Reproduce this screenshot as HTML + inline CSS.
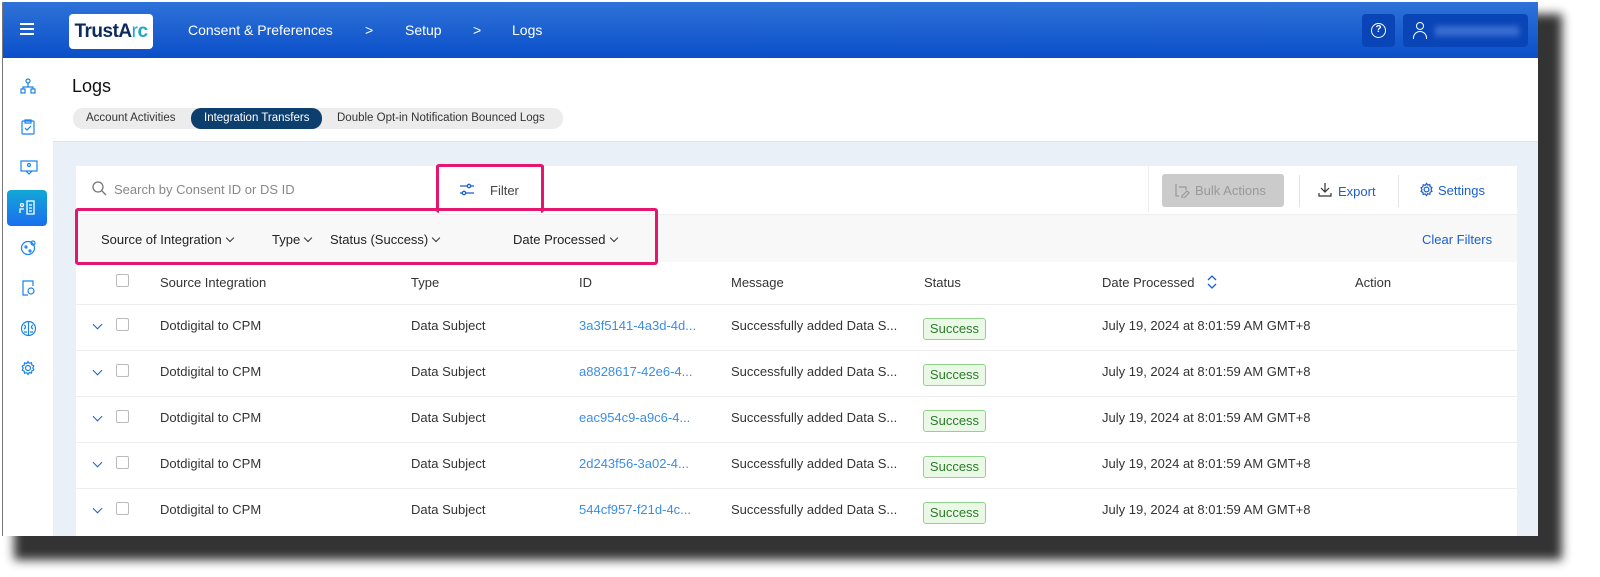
<!DOCTYPE html>
<html><head><meta charset="utf-8"><style>
*{box-sizing:border-box;margin:0;padding:0}
body{width:1600px;height:577px;background:#fff;font-family:"Liberation Sans",sans-serif;position:relative;overflow:hidden;font-size:13px;color:#222}
.shadow{position:absolute;left:14px;top:14px;width:1548px;height:546px;background:#333;filter:blur(5px)}
.app{position:absolute;left:2px;top:2px;width:1536px;height:534px;background:#eaf0f8;overflow:hidden;border-left:1px solid #777}
.hdr{position:absolute;left:0;top:0;width:100%;height:56px;background:linear-gradient(#2f72d8,#0a4fc9)}
.logo{position:absolute;left:66px;top:12px;width:84px;height:35px;background:#fff;border-radius:4px;font-size:19px;color:#0b2a5e;line-height:35px;text-align:center;font-weight:bold;letter-spacing:-0.5px}
.crumb{position:absolute;top:20px;color:#fff;font-size:14px}
.side{position:absolute;left:0;top:56px;width:50px;height:480px;background:#fff}
.top{position:absolute;left:50px;top:56px;right:0;height:84px;background:#fff;border-bottom:1px solid #dde4ee}
.tabs{position:absolute;left:20px;top:50px;height:21px;background:#ececec;border-radius:10px;width:490px;font-size:11.5px}
.tab{position:absolute;top:0;height:21px;line-height:21px;color:#333}
.card{position:absolute;left:73px;top:164px;width:1441px;height:380px;background:#fff}
.row{position:absolute;left:0;width:100%;border-top:1px solid #eee}
.c{position:absolute;font-size:13px;color:#333}
.succ{position:absolute;left:847px;width:63px;height:22px;border:1px solid #8fd48a;background:#eaf9e6;border-radius:3px;color:#2c7a2a;text-align:center;line-height:20px;font-size:13px}
.cb{position:absolute;left:40px;width:13px;height:13px;border:1px solid #bbb;border-radius:2px}
.pink{position:absolute;border:3px solid #e4166f;border-radius:3px}
.ic{position:absolute;left:17px}
.chev{display:inline-block;width:6px;height:6px;border-right:1.2px solid #333;border-bottom:1.2px solid #333;transform:rotate(45deg);margin-left:5px;position:relative;top:-3px}
.ex{position:absolute;left:18px;top:16px;width:7px;height:7px;border-right:1.5px solid #1a5fd0;border-bottom:1.5px solid #1a5fd0;transform:rotate(45deg)}
</style></head><body>
<div class="shadow"></div>
<div class="app">
<div class="hdr">
 <div style="position:absolute;left:17px;top:21px;width:14px;height:2px;background:#fff;box-shadow:0 5px 0 #fff,0 10px 0 #fff"></div>
 <div class="logo">TrustA<span style="color:#1aa9c6;font-weight:normal">r</span><span style="color:#1aa9c6">c</span></div>
 <div class="crumb" style="left:185px">Consent &amp; Preferences</div>
 <div class="crumb" style="left:362px">&gt;</div>
 <div class="crumb" style="left:402px">Setup</div>
 <div class="crumb" style="left:470px">&gt;</div>
 <div class="crumb" style="left:509px">Logs</div>
 <div style="position:absolute;left:1359px;top:12px;width:33px;height:33px;background:#0a45b8;border-radius:4px"><div style="position:absolute;left:9px;top:9px;width:15px;height:15px;border:1.5px solid #fff;border-radius:50%;color:#fff;font-size:10px;text-align:center;line-height:12px;font-weight:bold">?</div></div>
 <div style="position:absolute;left:1400px;top:12px;width:125px;height:33px;background:#0a45b8;border-radius:4px">
  <div style="position:absolute;left:13px;top:8px;width:8px;height:8px;border:1.5px solid #fff;border-radius:50%"></div>
  <div style="position:absolute;left:10px;top:17px;width:14px;height:8px;border:1.5px solid #fff;border-bottom:none;border-radius:7px 7px 0 0"></div>
  <div style="position:absolute;left:32px;top:12px;width:84px;height:10px;background:#3a6fd0;filter:blur(3px)"></div>
 </div>
</div>
<div class="side">
 <svg class="ic" style="top:20px" width="16" height="16" viewBox="0 0 16 16" fill="none" stroke="#1a82e8" stroke-width="1.2"><circle cx="8" cy="3" r="2"/><rect x="1" y="11" width="4" height="4"/><rect x="11" y="11" width="4" height="4"/><path d="M8 5v4M3 11V9h10v2"/></svg>
 <svg class="ic" style="top:60px" width="16" height="17" viewBox="0 0 16 17" fill="none" stroke="#1a82e8" stroke-width="1.2"><rect x="2" y="3" width="12" height="13" rx="1"/><path d="M5 2h6v3H5zM5 10l2 2 4-4"/></svg>
 <svg class="ic" style="top:101px" width="18" height="16" viewBox="0 0 18 16" fill="none" stroke="#1a82e8" stroke-width="1.2"><rect x="1" y="2" width="16" height="10"/><circle cx="9" cy="6" r="1.5"/><path d="M6 12l3 3 3-3"/></svg>
 <div style="position:absolute;left:4px;top:132px;width:40px;height:36px;border-radius:4px;background:linear-gradient(#12a8d6,#1b6ef0)"><svg style="position:absolute;left:11px;top:9px" width="18" height="18" viewBox="0 0 18 18" fill="none" stroke="#fff" stroke-width="1.3"><circle cx="4" cy="6" r="1.5"/><path d="M2 14v-4h4"/><rect x="9" y="2" width="7" height="13"/><path d="M11 6h3M11 9h3M11 12h3"/></svg></div>
 <svg class="ic" style="top:181px" width="17" height="17" viewBox="0 0 17 17" fill="none" stroke="#1a82e8" stroke-width="1.2"><circle cx="8" cy="9" r="6.5"/><circle cx="6" cy="8" r="1"/><circle cx="10" cy="12" r="1"/><circle cx="13" cy="4" r="2"/></svg>
 <svg class="ic" style="top:221px" width="16" height="17" viewBox="0 0 16 17" fill="none" stroke="#1a82e8" stroke-width="1.2"><path d="M13 7V2H3v14h5"/><circle cx="11" cy="12" r="3"/></svg>
 <svg class="ic" style="top:262px" width="17" height="17" viewBox="0 0 17 17" fill="none" stroke="#1a82e8" stroke-width="1.2"><circle cx="8.5" cy="8.5" r="7"/><path d="M8.5 2v13M4 5c2 1 2 3 0 4M13 5c-2 1-2 3 0 4M4 12h3M10 12h3"/></svg>
 <svg class="ic" style="top:302px" width="16" height="16" viewBox="0 0 16 16" fill="none" stroke="#1a82e8" stroke-width="1.2"><circle cx="8" cy="8" r="2.5"/><path d="M8 1.5l1.3 1.8 2.2-.6.3 2.2 2 1-1 2 1 2-2 1-.3 2.2-2.2-.6L8 14.5l-1.3-1.8-2.2.6-.3-2.2-2-1 1-2-1-2 2-1 .3-2.2 2.2.6z"/></svg>
</div>
<div class="top">
 <div style="position:absolute;left:19px;top:18px;font-size:18px;color:#111">Logs</div>
 <div class="tabs">
  <div class="tab" style="left:13px">Account Activities</div>
  <div class="tab" style="left:118px;background:#0c3e6e;color:#fff;border-radius:10px;padding:0 13px">Integration Transfers</div>
  <div class="tab" style="left:264px">Double Opt-in Notification Bounced Logs</div>
 </div>
</div>
<div class="card">
 <svg style="position:absolute;left:16px;top:15px" width="15" height="15" viewBox="0 0 15 15" fill="none" stroke="#777" stroke-width="1.3"><circle cx="6" cy="6" r="5"/><path d="M10 10l4 4"/></svg>
 <div class="c" style="left:38px;top:16px;color:#888">Search by Consent ID or DS ID</div>
 <svg style="position:absolute;left:383px;top:17px" width="16" height="13" viewBox="0 0 16 13" fill="none" stroke="#1a5fd0" stroke-width="1.3"><path d="M1 3h14M1 10h14"/><circle cx="10" cy="3" r="1.7" fill="#fff"/><circle cx="5" cy="10" r="1.7" fill="#fff"/></svg>
 <div class="c" style="left:414px;top:17px;color:#444">Filter</div>
 <div style="position:absolute;left:1072px;top:0;width:1px;height:46px;background:#eee"></div>
 <div style="position:absolute;left:1086px;top:8px;width:122px;height:33px;background:#cbcbcb;border-radius:3px;color:#999;font-size:13px;line-height:33px;padding-left:33px">Bulk Actions
  <svg style="position:absolute;left:13px;top:9px" width="15" height="15" viewBox="0 0 15 15" fill="none" stroke="#999" stroke-width="1.2"><path d="M1 1v12h3M4 4h7v3M7 13l5-5 2 2-5 5H7z"/></svg></div>
 <div style="position:absolute;left:1223px;top:9px;width:1px;height:32px;background:#e3e3e3"></div>
 <div style="position:absolute;left:1322px;top:9px;width:1px;height:32px;background:#e3e3e3"></div>
 <svg style="position:absolute;left:1242px;top:16px" width="14" height="15" viewBox="0 0 14 15" fill="none" stroke="#333" stroke-width="1.2"><path d="M7 1v9M3 6l4 4 4-4M1 11v3h12v-3"/></svg>
 <div class="c" style="left:1262px;top:18px;color:#1a5fd0">Export</div>
 <svg style="position:absolute;left:1343px;top:16px" width="15" height="15" viewBox="0 0 16 16" fill="none" stroke="#1a5fd0" stroke-width="1.3"><circle cx="8" cy="8" r="2.5"/><path d="M8 1.5l1.3 1.8 2.2-.6.3 2.2 2 1-1 2 1 2-2 1-.3 2.2-2.2-.6L8 14.5l-1.3-1.8-2.2.6-.3-2.2-2-1 1-2-1-2 2-1 .3-2.2 2.2.6z"/></svg>
 <div class="c" style="left:1362px;top:17px;color:#1a5fd0">Settings</div>
 <div style="position:absolute;left:0;top:48px;width:100%;height:48px;background:#f8f8f8;border-top:1px solid #eee">
  <div class="c" style="left:25px;top:17px;color:#222">Source of Integration<i class="chev"></i></div>
  <div class="c" style="left:196px;top:17px;color:#222">Type<i class="chev"></i></div>
  <div class="c" style="left:254px;top:17px;color:#222">Status (Success)<i class="chev"></i></div>
  <div class="c" style="left:437px;top:17px;color:#222">Date Processed<i class="chev"></i></div>
  <div class="c" style="left:1346px;top:17px;color:#1a5fd0">Clear Filters</div>
 </div>
 <div class="row" style="top:96px;height:42px;border:none">
  <div class="cb" style="top:12px"></div>
  <div class="c" style="left:84px;top:13px">Source Integration</div>
  <div class="c" style="left:335px;top:13px">Type</div>
  <div class="c" style="left:503px;top:13px">ID</div>
  <div class="c" style="left:655px;top:13px">Message</div>
  <div class="c" style="left:848px;top:13px">Status</div>
  <div class="c" style="left:1026px;top:13px">Date Processed</div>
  <svg style="position:absolute;left:1131px;top:12px" width="10" height="16" viewBox="0 0 10 16" fill="none" stroke="#1a5fd0" stroke-width="1.3"><path d="M1 6l4-4 4 4M1 10l4 4 4-4"/></svg>
  <div class="c" style="left:1279px;top:13px">Action</div>
 </div>
 <div class="row" style="top:138px;height:46px"><i class="ex"></i><div class="cb" style="top:13px"></div><div class="c" style="left:84px;top:13px">Dotdigital to CPM</div><div class="c" style="left:335px;top:13px">Data Subject</div><div class="c" style="left:503px;top:13px;color:#3a8ee8">3a3f5141-4a3d-4d...</div><div class="c" style="left:655px;top:13px">Successfully added Data S...</div><div class="succ" style="top:13px">Success</div><div class="c" style="left:1026px;top:13px">July 19, 2024 at 8:01:59 AM GMT+8</div></div>
 <div class="row" style="top:184px;height:46px"><i class="ex"></i><div class="cb" style="top:13px"></div><div class="c" style="left:84px;top:13px">Dotdigital to CPM</div><div class="c" style="left:335px;top:13px">Data Subject</div><div class="c" style="left:503px;top:13px;color:#3a8ee8">a8828617-42e6-4...</div><div class="c" style="left:655px;top:13px">Successfully added Data S...</div><div class="succ" style="top:13px">Success</div><div class="c" style="left:1026px;top:13px">July 19, 2024 at 8:01:59 AM GMT+8</div></div>
 <div class="row" style="top:230px;height:46px"><i class="ex"></i><div class="cb" style="top:13px"></div><div class="c" style="left:84px;top:13px">Dotdigital to CPM</div><div class="c" style="left:335px;top:13px">Data Subject</div><div class="c" style="left:503px;top:13px;color:#3a8ee8">eac954c9-a9c6-4...</div><div class="c" style="left:655px;top:13px">Successfully added Data S...</div><div class="succ" style="top:13px">Success</div><div class="c" style="left:1026px;top:13px">July 19, 2024 at 8:01:59 AM GMT+8</div></div>
 <div class="row" style="top:276px;height:46px"><i class="ex"></i><div class="cb" style="top:13px"></div><div class="c" style="left:84px;top:13px">Dotdigital to CPM</div><div class="c" style="left:335px;top:13px">Data Subject</div><div class="c" style="left:503px;top:13px;color:#3a8ee8">2d243f56-3a02-4...</div><div class="c" style="left:655px;top:13px">Successfully added Data S...</div><div class="succ" style="top:13px">Success</div><div class="c" style="left:1026px;top:13px">July 19, 2024 at 8:01:59 AM GMT+8</div></div>
 <div class="row" style="top:322px;height:58px"><i class="ex"></i><div class="cb" style="top:13px"></div><div class="c" style="left:84px;top:13px">Dotdigital to CPM</div><div class="c" style="left:335px;top:13px">Data Subject</div><div class="c" style="left:503px;top:13px;color:#3a8ee8">544cf957-f21d-4c...</div><div class="c" style="left:655px;top:13px">Successfully added Data S...</div><div class="succ" style="top:13px">Success</div><div class="c" style="left:1026px;top:13px">July 19, 2024 at 8:01:59 AM GMT+8</div></div>
</div>
<div class="pink" style="left:433px;top:162px;width:108px;height:49px;border-bottom:none"></div>
<div class="pink" style="left:72px;top:206px;width:583px;height:57px"></div>
</div>
</body></html>
